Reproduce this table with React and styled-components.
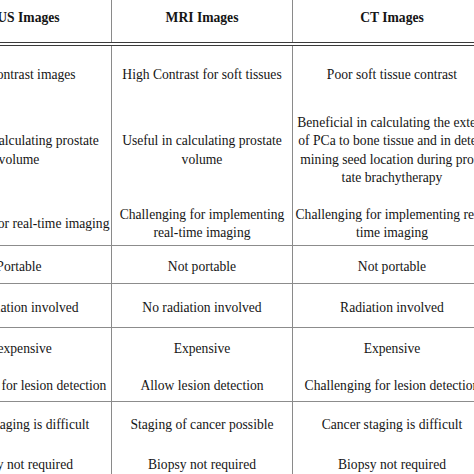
import React from "react";
import styled, { createGlobalStyle } from "styled-components";

const GlobalStyle = createGlobalStyle`
  html, body {
    margin: 0;
    padding: 0;
    background: #fff;
    overflow: hidden;
  }
  body {
    font-family: "Liberation Serif", "Times New Roman", serif;
    font-size: 13.6px;
    color: #151515;
  }
`;

const Page = styled.div`
  width: 474px;
  height: 474px;
  overflow: hidden;
`;

const Table = styled.div`
  margin-left: -73px;
  width: 564px;
`;

const Row = styled.div`
  display: grid;
  grid-template-columns: 185px 181px 198px;
  height: ${({h}) => h}px;
  box-sizing: border-box;
  border-bottom: ${({rule}) =>
    rule === "double" ? "4px double #3a3a3a" : rule ? "1px solid #8c8c8c" : "none"};
`;

const Cell = styled.div`
  display: flex;
  align-items: ${({head}) => (head ? "flex-start" : "center")};
  justify-content: center;
  text-align: center;
  box-sizing: border-box;
  min-width: 0;
  padding: ${({head}) => (head ? "9px 2px 0" : "6px 2px 0")};
  line-height: 18.5px;
  font-weight: ${({head}) => (head ? 700 : 400)};
  &:not(:last-child) {
    border-right: 1.5px solid #8a8a8a;
  }
`;

const Text = styled.div`
  white-space: nowrap;
`;

const Line = styled.div`
  white-space: nowrap;
`;

const rows = [
  { h: 52, cells: ["Low contrast images", "High Contrast for soft tissues", "Poor soft tissue contrast"] },
  {
    h: 99,
    cells: [
      ["Useful in calculating prostate", "volume"],
      ["Useful in calculating prostate", "volume"],
      ["Beneficial in calculating the extent", "of PCa to bone tissue and in deter-", "mining seed location during pros-", "tate brachytherapy"],
    ],
  },
  {
    h: 49,
    rule: true,
    cells: [
      "Well suited for real-time imaging",
      ["Challenging for implementing", "real-time imaging"],
      ["Challenging for implementing real-", "time imaging"],
    ],
  },
  { h: 38, rule: true, cells: ["Portable", "Not portable", "Not portable"] },
  { h: 44, rule: true, cells: ["No radiation involved", "No radiation involved", "Radiation involved"] },
  { h: 37, cells: ["Inexpensive", "Expensive", "Expensive"] },
  { h: 37, rule: true, cells: ["Challenging for lesion detection", "Allow lesion detection", "Challenging for lesion detection"] },
  { h: 40, cells: ["Cancer staging is difficult", "Staging of cancer possible", "Cancer staging is difficult"] },
  { h: 40, cells: ["Biopsy not required", "Biopsy not required", "Biopsy not required"] },
];

const CellText = ({ value }) =>
  Array.isArray(value) ? (
    <Text>
      {value.map((line, i) => (
        <Line key={i}>{line}</Line>
      ))}
    </Text>
  ) : (
    <Text>{value}</Text>
  );

const App = () => {
  return (
    <Page>
      <GlobalStyle />
      <Table>
        <Row h={46} rule="double">
          <Cell head>TRUS Images</Cell>
          <Cell head>MRI Images</Cell>
          <Cell head>CT Images</Cell>
        </Row>
        {rows.map((r, i) => (
          <Row key={i} h={r.h} rule={r.rule}>
            {r.cells.map((c, j) => (
              <Cell key={j}>
                <CellText value={c} />
              </Cell>
            ))}
          </Row>
        ))}
      </Table>
    </Page>
  );
};

export default App;
